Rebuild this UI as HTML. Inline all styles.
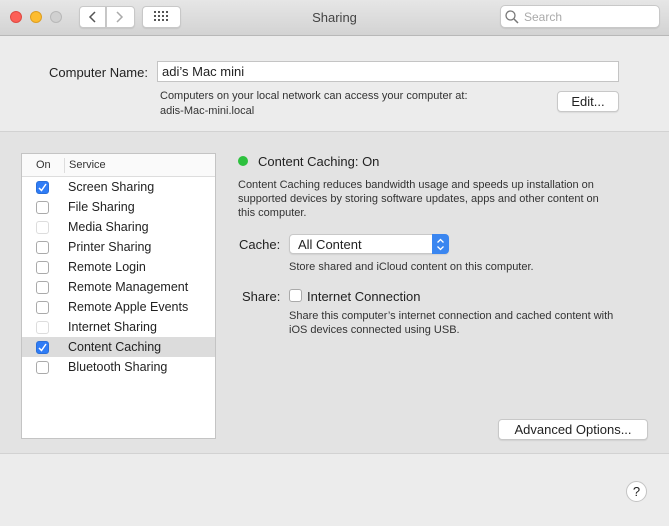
<!DOCTYPE html>
<html><head><style>
*{margin:0;padding:0;box-sizing:border-box}
body{width:669px;height:526px;overflow:hidden;background:#ececec;font-family:"Liberation Sans",sans-serif;font-size:12px;color:#222;position:relative}
.a{position:absolute;white-space:nowrap}
.tb{position:absolute;left:0;top:0;width:669px;height:36px;background:linear-gradient(#e6e6e6,#d3d3d3);border-bottom:1px solid #b8b8b8}
.dot{position:absolute;top:11px;width:12px;height:12px;border-radius:50%}
.btn{position:absolute;background:#fff;border:1px solid #c8c8c8;border-radius:4px;box-shadow:0 1px 1px rgba(0,0,0,.08)}
.cb{position:absolute;width:13px;height:13px;border:1px solid #aaa;border-radius:3px;background:#fff}
.cb.on{background:#2f7cf6;border-color:#2a6fd8}
.cb.dis{border-color:#ddd}
.small{font-size:11px;color:#333}
</style></head><body>
<div class="tb">
<div class="dot" style="left:10px;background:#fc5f57;border:1px solid #de4a42"></div>
<div class="dot" style="left:30px;background:#fdbc2e;border:1px solid #dd9e22"></div>
<div class="dot" style="left:50px;background:#d0d0d0;border:1px solid #b8b8b8"></div>
<div class="btn" style="left:79px;top:6px;width:27px;height:22px;border-radius:4px 0 0 4px"></div>
<div class="btn" style="left:106px;top:6px;width:29px;height:22px;border-radius:0 4px 4px 0"></div>
<svg class="a" style="left:86px;top:10px" width="40" height="14"><path d="M9 2 L4 7 L9 12" stroke="#555" stroke-width="1.5" fill="none"/><path d="M31 2 L36 7 L31 12" stroke="#aaa" stroke-width="1.5" fill="none"/></svg>
<div class="btn" style="left:142px;top:6px;width:39px;height:22px"></div>
<svg class="a" style="left:154px;top:11px" width="15" height="11"><g fill="#555"><rect x="0" y="0" width="2" height="2"/><rect x="4" y="0" width="2" height="2"/><rect x="8" y="0" width="2" height="2"/><rect x="12" y="0" width="2" height="2"/><rect x="0" y="4" width="2" height="2"/><rect x="4" y="4" width="2" height="2"/><rect x="8" y="4" width="2" height="2"/><rect x="12" y="4" width="2" height="2"/><rect x="0" y="8" width="2" height="2"/><rect x="4" y="8" width="2" height="2"/><rect x="8" y="8" width="2" height="2"/><rect x="12" y="8" width="2" height="2"/></g></svg>
<div class="a" style="left:0;width:669px;text-align:center;top:10px;font-size:13px;color:#444">Sharing</div>
<div class="btn" style="left:500px;top:5px;width:160px;height:23px;border-radius:5px"></div>
<svg class="a" style="left:505px;top:10px" width="14" height="14"><circle cx="5.5" cy="5.5" r="4.5" stroke="#777" stroke-width="1.3" fill="none"/><path d="M9 9 L13 13" stroke="#777" stroke-width="1.5"/></svg>
<div class="a" style="left:524px;top:10px;color:#aaa;font-size:12px">Search</div>
</div>

<div class="a" style="left:49px;top:65px;font-size:13px">Computer Name:</div>
<div class="a" style="left:157px;top:61px;width:462px;height:21px;background:#fff;border:1px solid #c4c4c4"></div>
<div class="a" style="left:162px;top:64px;font-size:13px">adi’s Mac mini</div>
<div class="a small" style="left:160px;top:89px;line-height:15px">Computers on your local network can access your computer at:<br>adis-Mac-mini.local</div>
<div class="btn" style="left:557px;top:91px;width:62px;height:21px"></div>
<div class="a" style="left:557px;top:94px;width:62px;text-align:center;font-size:13px">Edit...</div>

<div class="a" style="left:0;top:131px;width:669px;height:323px;background:#e3e3e3;border-top:1px solid #d2d2d2;border-bottom:1px solid #d2d2d2"></div>
<div class="a" style="left:21px;top:153px;width:195px;height:286px;background:#fff;border:1px solid #c4c4c4"></div>
<div class="a" style="left:22px;top:154px;width:193px;height:23px;background:#fafafa;border-bottom:1px solid #ddd"></div>
<div class="a" style="left:64px;top:158px;width:1px;height:15px;background:#ddd"></div>
<div class="a small" style="left:36px;top:159px">On</div>
<div class="a small" style="left:69px;top:159px">Service</div>
<div class="a" style="left:22px;top:337px;width:193px;height:20px;background:#dcdcdc"></div>

<div class="cb on" style="left:36px;top:181px"></div>
<div class="cb" style="left:36px;top:201px"></div>
<div class="cb dis" style="left:36px;top:221px"></div>
<div class="cb" style="left:36px;top:241px"></div>
<div class="cb" style="left:36px;top:261px"></div>
<div class="cb" style="left:36px;top:281px"></div>
<div class="cb" style="left:36px;top:301px"></div>
<div class="cb dis" style="left:36px;top:321px"></div>
<div class="cb on" style="left:36px;top:341px"></div>
<div class="cb" style="left:36px;top:361px"></div>
<svg class="a" style="left:36px;top:181px" width="13" height="180"><path d="M3 7 L5.5 9.5 L10 3" stroke="#fff" stroke-width="1.5" fill="none"/><path d="M3 167 L5.5 169.5 L10 163" stroke="#fff" stroke-width="1.5" fill="none"/></svg>
<div class="a" style="left:68px;top:177px;line-height:20px;font-size:12.5px">Screen Sharing<br>File Sharing<br>Media Sharing<br>Printer Sharing<br>Remote Login<br>Remote Management<br>Remote Apple Events<br>Internet Sharing<br>Content Caching<br>Bluetooth Sharing</div>

<div class="a" style="left:238px;top:156px;width:10px;height:10px;border-radius:50%;background:#2dc13e"></div>
<div class="a" style="left:258px;top:154px;font-size:13px">Content Caching: On</div>
<div class="a small" style="left:238px;top:178px;line-height:14px">Content Caching reduces bandwidth usage and speeds up installation on<br>supported devices by storing software updates, apps and other content on<br>this computer.</div>
<div class="a" style="left:239px;top:237px;font-size:13px">Cache:</div>
<div class="btn" style="left:289px;top:234px;width:160px;height:20px"></div>
<div class="a" style="left:432px;top:234px;width:17px;height:20px;background:#3a86f0;border-radius:0 4px 4px 0"></div>
<svg class="a" style="left:436px;top:238px" width="9" height="13"><path d="M1.5 4.5 L4.5 1.5 L7.5 4.5 M1.5 8.5 L4.5 11.5 L7.5 8.5" stroke="#fff" stroke-width="1.3" fill="none"/></svg>
<div class="a" style="left:298px;top:237px;font-size:13px">All Content</div>
<div class="a small" style="left:289px;top:261px">Store shared and iCloud content on this computer.</div>
<div class="a" style="left:242px;top:289px;font-size:13px">Share:</div>
<div class="cb" style="left:289px;top:289px"></div>
<div class="a" style="left:307px;top:289px;font-size:13px">Internet Connection</div>
<div class="a small" style="left:289px;top:309px;line-height:14px">Share this computer’s internet connection and cached content with<br>iOS devices connected using USB.</div>
<div class="btn" style="left:498px;top:419px;width:150px;height:21px"></div>
<div class="a" style="left:498px;top:422px;width:150px;text-align:center;font-size:13px">Advanced Options...</div>

<div class="a" style="left:626px;top:481px;width:21px;height:21px;border-radius:50%;background:#fff;border:1px solid #c4c4c4;text-align:center;line-height:19px;font-size:13px">?</div>
</body></html>
